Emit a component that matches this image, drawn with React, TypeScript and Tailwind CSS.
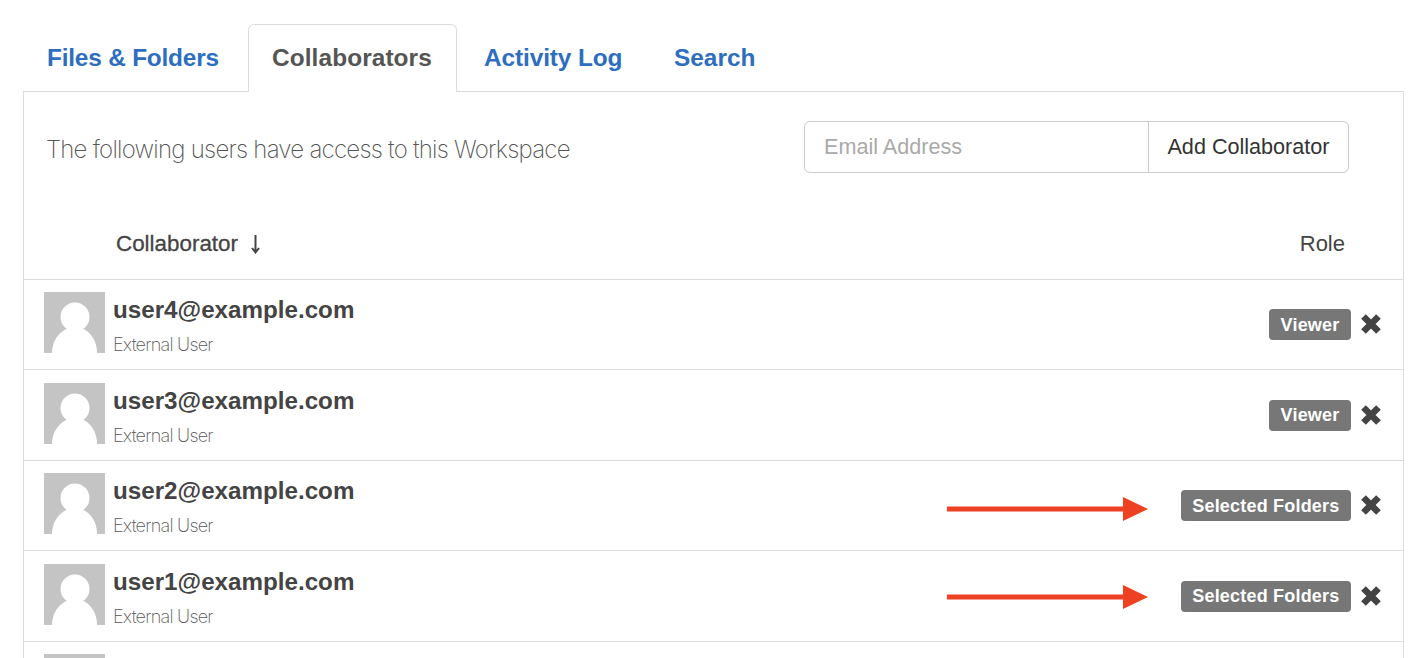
const SANS = "font-['Liberation_Sans',Arial,sans-serif]";

function Avatar() {
  return (
    <svg width="61" height="61" viewBox="0 0 61 61" className="shrink-0">
      <rect width="61" height="61" fill="#c4c4c4" />
      <circle cx="31" cy="25" r="14.5" fill="#fff" />
      <path d="M8 61C8 46 19 35 31 35C43 35 53 46 53 61Z" fill="#fff" />
    </svg>
  );
}

function CloseIcon() {
  return (
    <svg width="20" height="20" viewBox="0 0 20 20" className="-mt-[1px] shrink-0">
      <path d="M2.5 2.5L17.5 17.5M17.5 2.5L2.5 17.5" stroke="#444" strokeWidth="6.6" strokeLinecap="butt" fill="none" />
    </svg>
  );
}

function Arrow({ top }: { top: string }) {
  return (
    <svg width="202" height="26" viewBox="0 0 202 26" className={`absolute left-[923px] ${top}`}>
      <path d="M0 10.5H176V1L201 13L176 25V15.5H0Z" fill="#ee4023" />
    </svg>
  );
}

function Row({ email, role, arrowTop }: { email: string; role: string; arrowTop?: string }) {
  return (
    <div className="relative flex h-[90.5px] items-start border-b border-[#dcdcdc] pl-5 pr-[22px] pt-[12.5px]">
      <Avatar />
      <div className="ml-2 flex flex-col">
        <div className="h-[36px] text-[24.2px] font-bold leading-[36px] text-[#444]">{email}</div>
        <div className="mt-[4px] font-['Inter',sans-serif] text-[18px] font-extralight leading-[26px] tracking-[-0.75px] text-[#555]">External User</div>
      </div>
      {arrowTop && <Arrow top={arrowTop} />}
      <div className="ml-auto mt-[17px] flex items-center gap-[10px]">
        <span className="flex h-[31px] items-center rounded-[4px] bg-[#777] px-[11.5px] pt-[1px] text-[18px] font-bold tracking-[0.2px] text-white">{role}</span>
        <CloseIcon />
      </div>
    </div>
  );
}

const tabs = [
  { label: "Files & Folders", box: "w-[221px] mr-[4px] border-transparent pt-[1px] pl-[23px] tracking-[-0.2px] text-[#2d6ec0]" },
  { label: "Collaborators", box: "w-[209px] mr-[4px] rounded-t-[6px] border-[#dcdcdc] border-b-0 bg-white h-[68px] pl-[23px] tracking-[0.1px] text-[#555]" },
  { label: "Activity Log", box: "w-[185px] mr-[4px] border-transparent pt-[1px] pl-[22px] tracking-[-0.1px] text-[#2d6ec0]" },
  { label: "Search", box: "border-transparent pt-[1px] pl-[23px] text-[#2d6ec0]" },
];

export default function App() {
  return (
    <div className={`h-[658px] w-[1422px] overflow-hidden bg-white pl-[23px] pt-[24px] ${SANS}`}>
      <div className="relative z-10 flex h-[68px] items-start">
        {tabs.map((t) => (
          <div key={t.label} className={`flex h-[67px] items-center whitespace-nowrap border text-[24.4px] font-bold ${t.box}`}>
            {t.label}
          </div>
        ))}
      </div>
      <div className="-mt-px h-[600px] w-[1381px] border border-[#dcdcdc]">
        <div className="flex h-[123px] items-start pl-[22px]">
          <p className="mt-[41px] font-['Inter',sans-serif] text-[24px] font-extralight leading-[34px] tracking-[-0.75px] text-[#555]">
            The following users have access to this Workspace
          </p>
          <div className="ml-auto mr-[54px] mt-[29px] flex h-[52px] w-[545px] rounded-[6px] border border-[#ccc] text-[21.6px]">
            <div className="flex flex-1 items-center border-r border-[#ccc] pl-[19px] text-[#aaa]">Email Address</div>
            <div className="flex w-[199px] items-center justify-center text-[#333]">Add Collaborator</div>
          </div>
        </div>
        <div className="flex h-[64.5px] items-center justify-between border-b border-[#dcdcdc] pb-[6px] pl-[92px] pr-[58px] text-[#444]">
          <div className="flex items-center gap-[12px] text-[22.4px] [-webkit-text-stroke:0.3px_#444]">
            Collaborator
            <svg width="11" height="20" viewBox="0 0 11 20">
              <path d="M5.5 1V18M2 14L5.5 18.5L9 14" stroke="#444" strokeWidth="2" fill="none" />
            </svg>
          </div>
          <div className="text-[22px]">Role</div>
        </div>
        <Row email="user4@example.com" role="Viewer" />
        <Row email="user3@example.com" role="Viewer" />
        <Row email="user2@example.com" role="Selected Folders" arrowTop="top-[35.5px]" />
        <Row email="user1@example.com" role="Selected Folders" arrowTop="top-[33px]" />
        <div className="pl-5 pt-[12.5px]">
          <Avatar />
        </div>
      </div>
    </div>
  );
}
